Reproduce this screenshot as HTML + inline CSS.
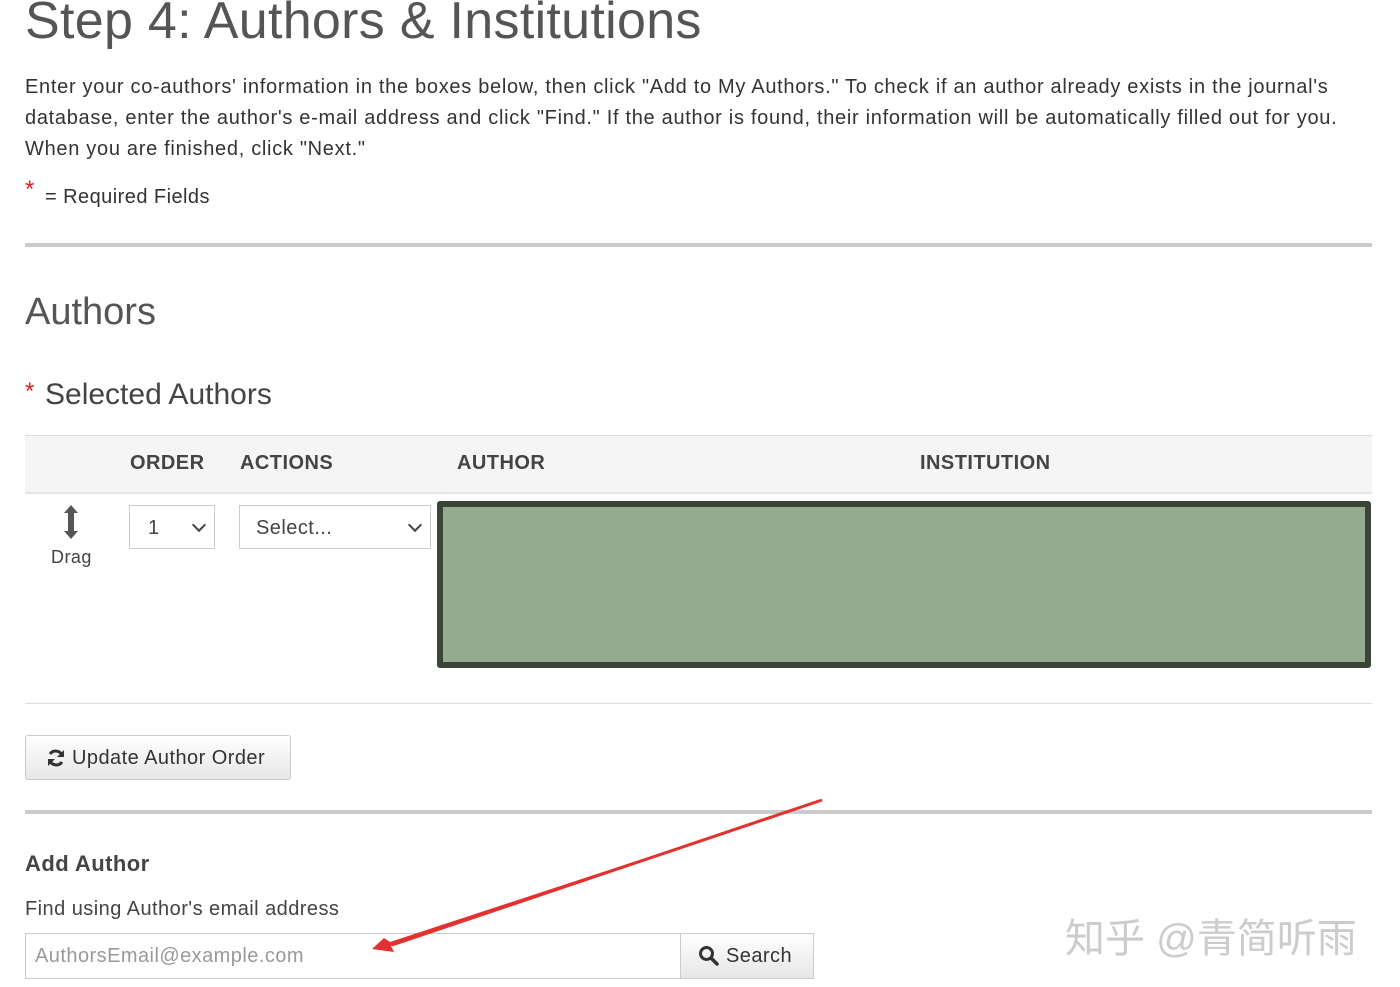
<!DOCTYPE html>
<html><head><meta charset="utf-8"><style>
body{margin:0;width:1400px;height:987px;background:#fff;font-family:"Liberation Sans",sans-serif;color:#333;position:relative;overflow:hidden;letter-spacing:.45px}
.a{position:absolute}
h1{position:absolute;left:25px;top:-9px;margin:0;font-weight:normal;font-size:52px;color:#555;letter-spacing:.3px}
.p{left:25px;top:72px;font-size:20px;line-height:31px;color:#333;width:1345px;letter-spacing:.7px}
.hr{left:25px;width:1347px;background:#ccc}
.sel{border:1px solid #ccc;background:#fff;height:44px;box-sizing:border-box;font-size:20px;color:#444}
.chev{position:absolute;right:10px;top:12px;width:8px;height:8px;border-right:2px solid #444;border-bottom:2px solid #444;transform:rotate(45deg)}
.th{top:452px;font-size:20px;font-weight:bold;color:#444}
</style></head><body>
<h1>Step 4: Authors &amp; Institutions</h1>
<div class="a p">Enter your co-authors' information in the boxes below, then click "Add to My Authors." To check if an author already exists in the journal's database, enter the author's e-mail address and click "Find." If the author is found, their information will be automatically filled out for you. When you are finished, click "Next."</div>
<div class="a" style="left:25px;top:176px;font-size:24px;color:#d22">*</div>
<div class="a" style="left:45px;top:186px;font-size:20px">= Required Fields</div>
<div class="a hr" style="top:243px;height:4px"></div>
<div class="a" style="left:25px;top:291px;font-size:38px;color:#555;letter-spacing:0">Authors</div>
<div class="a" style="left:25px;top:378px;font-size:24px;color:#d22">*</div>
<div class="a" style="left:45px;top:378px;font-size:30px;color:#444;letter-spacing:0">Selected Authors</div>
<div class="a" style="left:25px;top:435px;width:1347px;height:56px;background:#f5f5f5;border-top:1px solid #ddd;border-bottom:2px solid #e5e5e5"></div>
<div class="a th" style="left:130px">ORDER</div>
<div class="a th" style="left:240px">ACTIONS</div>
<div class="a th" style="left:457px">AUTHOR</div>
<div class="a th" style="left:920px">INSTITUTION</div>
<svg class="a" style="left:61px;top:503px" width="20" height="38"><path d="M10 2 L3 10 H7 V28 H3 L10 36 L17 28 H13 V10 H17Z" fill="#555"/></svg>
<div class="a" style="left:51px;top:547px;font-size:18px;color:#444">Drag</div>
<div class="a sel" style="left:129px;top:505px;width:86px;padding:11px 18px">1<span class="chev" style="right:10px;top:14px"></span></div>
<div class="a sel" style="left:239px;top:505px;width:192px;padding:11px 16px">Select...<span class="chev" style="top:14px"></span></div>
<div class="a" style="left:437px;top:501px;width:934px;height:167px;box-sizing:border-box;border:6px solid #3a4538;border-radius:3px;background:#96ab8d"></div>
<div class="a hr" style="top:703px;height:1px;background:#ddd"></div>
<div class="a" style="left:25px;top:735px;width:266px;height:45px;box-sizing:border-box;border:1px solid #ccc;border-radius:3px;background:linear-gradient(#fff,#e6e6e6);font-size:20px;color:#333;padding:11px 0 0 46px">Update Author Order</div>
<svg class="a" style="left:46px;top:748px" width="20" height="20"><path d="M16 7A7 7 0 0 0 4 6M4 13A7 7 0 0 0 16 14" stroke="#333" stroke-width="3" fill="none"/><path d="M18 2V9H11Z M2 18V11H9Z" fill="#333"/></svg>
<div class="a hr" style="top:810px;height:4px"></div>
<div class="a" style="left:25px;top:851px;font-size:22px;font-weight:bold;color:#444">Add Author</div>
<div class="a" style="left:25px;top:898px;font-size:20px;color:#444">Find using Author's email address</div>
<div class="a" style="left:25px;top:933px;width:656px;height:46px;box-sizing:border-box;border:1px solid #ccc;font-size:20px;color:#999;padding:11px 9px">AuthorsEmail@example.com</div>
<div class="a" style="left:680px;top:933px;width:134px;height:46px;box-sizing:border-box;border:1px solid #ccc;background:linear-gradient(#fff,#e6e6e6);font-size:20px;color:#333;padding:11px 0 0 45px">Search</div>
<svg class="a" style="left:698px;top:945px" width="22" height="22"><circle cx="8.5" cy="8.5" r="6" stroke="#333" stroke-width="3" fill="none"/><path d="M13 13L19 19" stroke="#333" stroke-width="3.5" stroke-linecap="round"/></svg>
<svg class="a" style="left:0;top:0" width="1400" height="987"><path d="M822 800 L390 942 L384 938 L372 949 L394 952 L391 946Z" fill="#e53030"/><path d="M822 800 L392 945" stroke="#e53030" stroke-width="3"/></svg>
<div class="a" style="left:1065px;top:906px;font-size:40px;color:#ccc;letter-spacing:0;font-family:'Liberation Sans','Noto Sans CJK SC',sans-serif">知乎 @青简听雨</div>
</body></html>
